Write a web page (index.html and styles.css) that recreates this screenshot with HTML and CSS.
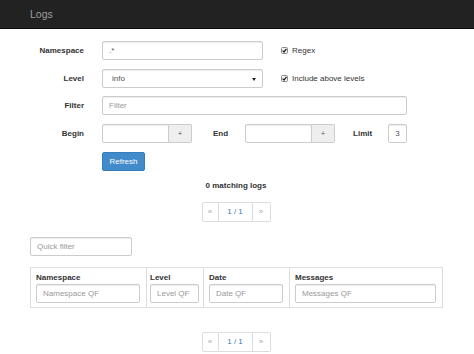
FILE: index.html
```html
<!DOCTYPE HTML>
<html lang="en">
  <head>
    <meta charset="UTF-8">
    <title>Logs</title>
    <link rel="stylesheet" href="styles.css">
  </head>
  <body>
    <nav class="barra">
        <span class="marca">Logs</span>
    </nav>
    <div class="contenedor">
        <form class="formulario">
            <div class="fila">
                <label class="etiqueta">Namespace</label>
                <input type="text" class="campo campo-ns" value=".*"/>
                <label class="marcar">
                    <svg width="7" height="7" viewBox="0 0 7 7"><rect x="0.5" y="0.5" width="6" height="6" rx="1" fill="#f4f4f4" stroke="#8a8a8a"/><path d="M1.6 3.6 L3 5 L5.5 1.8" fill="none" stroke="#222" stroke-width="1.3"/></svg>
                    Regex
                </label>
            </div>
            <div class="fila">
                <label class="etiqueta">Level</label>
                <div class="campo campo-ns selector">info</div>
                <label class="marcar">
                    <svg width="7" height="7" viewBox="0 0 7 7"><rect x="0.5" y="0.5" width="6" height="6" rx="1" fill="#f4f4f4" stroke="#8a8a8a"/><path d="M1.6 3.6 L3 5 L5.5 1.8" fill="none" stroke="#222" stroke-width="1.3"/></svg>
                    Include above levels
                </label>
            </div>
            <div class="fila">
                <label class="etiqueta">Filter</label>
                <input type="text" class="campo campo-filtro" placeholder="Filter"/>
            </div>
            <div class="fila">
                <label class="etiqueta">Begin</label>
                <div class="grupo">
                    <input type="text" class="campo campo-fecha"/>
                    <span class="anexo">+</span>
                </div>
                <label class="etiqueta-corta etiqueta-fin">End</label>
                <div class="grupo">
                    <input type="text" class="campo campo-fecha"/>
                    <span class="anexo">+</span>
                </div>
                <label class="etiqueta-corta etiqueta-limite">Limit</label>
                <input type="text" class="campo campo-limite" value="3"/>
            </div>
            <div class="fila">
                <span class="etiqueta"></span>
                <button type="button" class="boton">Refresh</button>
            </div>
        </form>

        <p class="total">0 matching logs</p>

        <div class="paginas">
            <span class="pagina apagada">&laquo;</span>
            <span class="pagina actual">1 / 1</span>
            <span class="pagina apagada">&raquo;</span>
        </div>

        <input type="text" class="campo campo-rapido" placeholder="Quick filter"/>

        <table class="tabla">
            <tr>
                <th class="col-ns"><div class="titulo">Namespace</div><input type="text" class="campo campo-qf" placeholder="Namespace QF"/></th>
                <th class="col-nivel"><div class="titulo">Level</div><input type="text" class="campo campo-qf" placeholder="Level QF"/></th>
                <th class="col-fecha"><div class="titulo">Date</div><input type="text" class="campo campo-qf" placeholder="Date QF"/></th>
                <th class="col-msg"><div class="titulo">Messages</div><input type="text" class="campo campo-qf" placeholder="Messages QF"/></th>
            </tr>
        </table>

        <div class="paginas paginas-abajo">
            <span class="pagina apagada">&laquo;</span>
            <span class="pagina actual">1 / 1</span>
            <span class="pagina apagada">&raquo;</span>
        </div>
    </div>
  </body>
</html>
```

FILE: styles.css
```css
html, body {
    padding: 0;
    margin: 0;
    border: 0;
    width: 100%;
}

body {
    font-family: "Liberation Sans", Arial, Helvetica, sans-serif;
    font-size: 8px;
    color: #333;
    background: #fff;
}

.barra {
    height: 28px;
    background-color: #222;
    border-bottom: solid 1px #080808;
    display: flex;
    align-items: center;
    padding-left: 30px;
}

.marca {
    color: #9d9d9d;
    font-size: 10.5px;
}

.contenedor {
    width: 412px;
    padding-left: 30px;
}

.formulario {
    padding-top: 12px;
}

.fila {
    display: flex;
    align-items: center;
    height: 19px;
    margin-bottom: 8.7px;
}

.etiqueta {
    width: 54px;
    margin-right: 18px;
    text-align: right;
    font-weight: bold;
}

.etiqueta-corta {
    font-weight: bold;
}

.etiqueta-fin {
    margin-left: 21px;
    margin-right: 17px;
}

.etiqueta-limite {
    margin-left: 18px;
    margin-right: 16px;
}

.campo {
    box-sizing: border-box;
    height: 19px;
    padding: 0 6px;
    border: solid 1px #ccc;
    border-radius: 2px;
    box-shadow: inset 0 1px 1px rgba(0, 0, 0, .075);
    font-family: inherit;
    font-size: 8px;
    color: #555;
    background: #fff;
    outline: none;
}

.campo::placeholder {
    color: #999;
}

.campo-ns {
    width: 161px;
}

.selector {
    position: relative;
    display: flex;
    align-items: center;
    padding-left: 9px;
}

.selector::after {
    content: "";
    position: absolute;
    right: 6px;
    top: 8px;
    border-top: solid 3px #222;
    border-left: solid 2px transparent;
    border-right: solid 2px transparent;
}

.marcar {
    display: flex;
    align-items: center;
    gap: 4px;
    margin-left: 18px;
}

.campo-filtro {
    width: 305px;
}

.grupo {
    display: flex;
}

.campo-fecha {
    width: 67px;
    border-radius: 2px 0 0 2px;
}

.anexo {
    box-sizing: border-box;
    width: 23px;
    height: 19px;
    display: flex;
    align-items: center;
    justify-content: center;
    background-color: #eee;
    border: solid 1px #ccc;
    border-left: none;
    border-radius: 0 2px 2px 0;
    color: #555;
    font-size: 7px;
}

.campo-limite {
    width: 19px;
}

.boton {
    box-sizing: border-box;
    width: 43px;
    height: 19px;
    padding: 0;
    background-color: #428bca;
    border: solid 1px #357ebd;
    border-radius: 2px;
    color: #fff;
    font-family: inherit;
    font-size: 8px;
}

.total {
    margin: 9px 0 0;
    line-height: 11px;
    text-align: center;
    font-weight: bold;
}

.paginas {
    display: flex;
    justify-content: center;
    margin-top: 11px;
}

.pagina {
    box-sizing: border-box;
    height: 20px;
    display: flex;
    align-items: center;
    justify-content: center;
    border: solid 1px #ddd;
    background: #fff;
}

.pagina + .pagina {
    border-left: none;
}

.pagina:first-child {
    width: 17px;
    border-radius: 2px 0 0 2px;
}

.pagina:last-child {
    width: 18px;
    border-radius: 0 2px 2px 0;
}

.apagada {
    color: #aaa;
}

.actual {
    width: 34px;
    color: #337ab7;
}

.campo-rapido {
    display: block;
    width: 102px;
    margin-top: 15px;
}

.tabla {
    margin-top: 11px;
    width: 412px;
    border-collapse: collapse;
    table-layout: fixed;
    border: solid 1px #ddd;
}

.tabla th {
    box-sizing: border-box;
    padding: 4px 6px 4px 5px;
    border-left: solid 1px #ddd;
    text-align: left;
    vertical-align: top;
}

.col-ns { width: 116px; }
.col-nivel { width: 57px; }
.col-fecha { width: 86px; }
.col-msg { width: 153px; }

.titulo {
    line-height: 12px;
    font-weight: bold;
}

.campo-qf {
    display: block;
    width: 100%;
}

.tabla .col-nivel {
    padding-left: 3px;
    padding-right: 4px;
}

.paginas-abajo {
    margin-top: 24px;
}
```
